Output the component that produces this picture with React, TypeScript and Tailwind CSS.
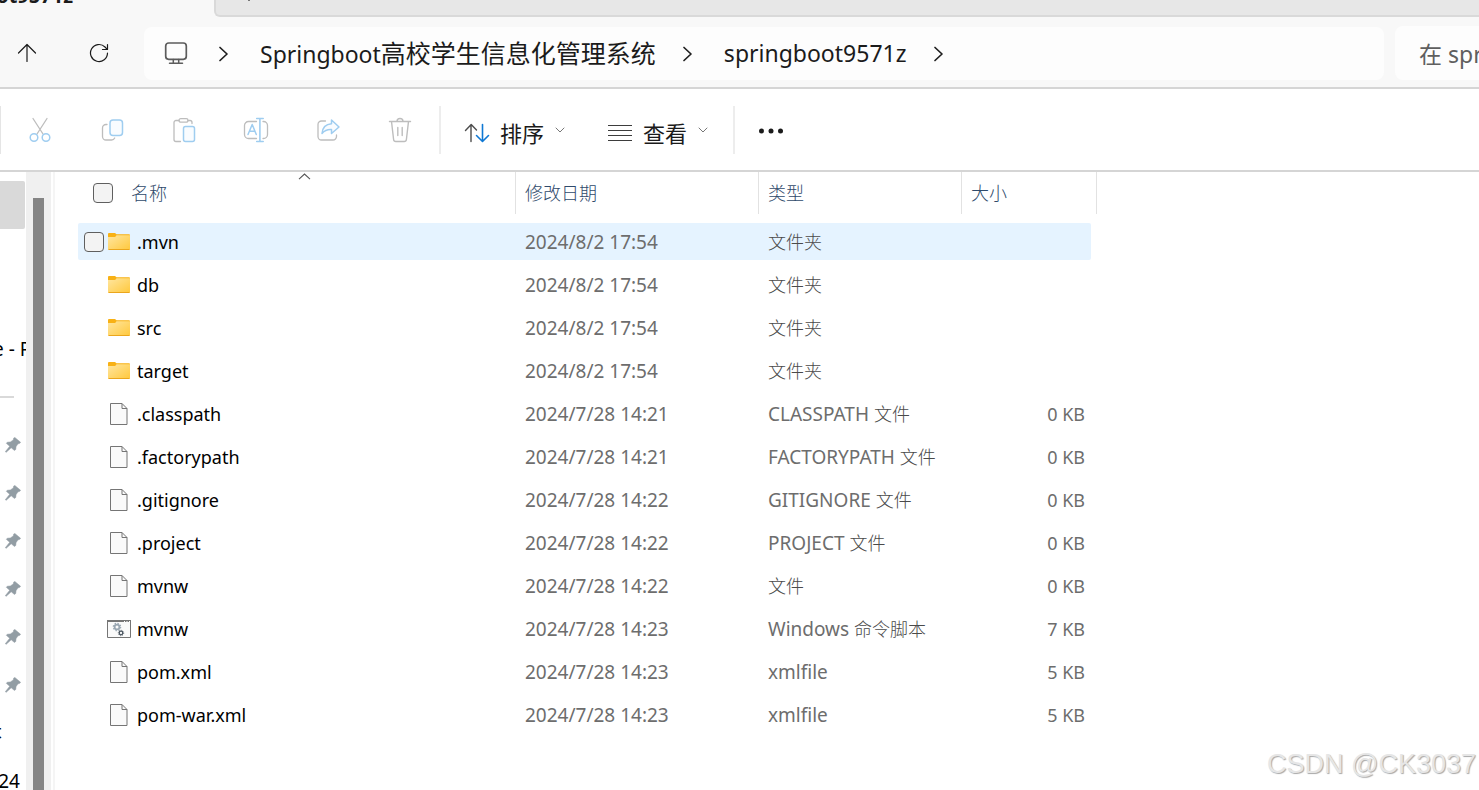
import type { ReactNode } from "react";

type Kind = "folder" | "file" | "batch";

interface Entry {
  name: string;
  kind: Kind;
  date: string;
  typeLatin?: string;
  typeHan?: string;
  size?: string;
}

const entries: Entry[] = [
  { name: ".mvn", kind: "folder", date: "2024/8/2 17:54", typeHan: "文件夹" },
  { name: "db", kind: "folder", date: "2024/8/2 17:54", typeHan: "文件夹" },
  { name: "src", kind: "folder", date: "2024/8/2 17:54", typeHan: "文件夹" },
  { name: "target", kind: "folder", date: "2024/8/2 17:54", typeHan: "文件夹" },
  { name: ".classpath", kind: "file", date: "2024/7/28 14:21", typeLatin: "CLASSPATH ", typeHan: "文件", size: "0 KB" },
  { name: ".factorypath", kind: "file", date: "2024/7/28 14:21", typeLatin: "FACTORYPATH ", typeHan: "文件", size: "0 KB" },
  { name: ".gitignore", kind: "file", date: "2024/7/28 14:22", typeLatin: "GITIGNORE ", typeHan: "文件", size: "0 KB" },
  { name: ".project", kind: "file", date: "2024/7/28 14:22", typeLatin: "PROJECT ", typeHan: "文件", size: "0 KB" },
  { name: "mvnw", kind: "file", date: "2024/7/28 14:22", typeHan: "文件", size: "0 KB" },
  { name: "mvnw", kind: "batch", date: "2024/7/28 14:23", typeLatin: "Windows ", typeHan: "命令脚本", size: "7 KB" },
  { name: "pom.xml", kind: "file", date: "2024/7/28 14:23", typeLatin: "xmlfile", size: "5 KB" },
  { name: "pom-war.xml", kind: "file", date: "2024/7/28 14:23", typeLatin: "xmlfile", size: "5 KB" },
];

const GRAY = "#bdbdbd";
const BLUE = "#9fcdf0";

function Svg({ size = 26, children }: { size?: number; children: ReactNode }) {
  return (
    <svg width={size} height={size} viewBox={`0 0 ${size} ${size}`} fill="none" strokeLinecap="round" strokeLinejoin="round" aria-hidden="true">
      {children}
    </svg>
  );
}

function CutIcon() {
  return (
    <Svg>
      <path d="M6 1.500 16 17M20 1.500 10 17" stroke={GRAY} strokeWidth="1.300" />
      <circle cx="7" cy="20.500" r="3.800" stroke={BLUE} strokeWidth="1.500" />
      <circle cx="19" cy="20.500" r="3.800" stroke={BLUE} strokeWidth="1.500" />
    </Svg>
  );
}

function CopyIcon() {
  return (
    <Svg>
      <path d="M8 7.500h-1A3.500 3.500 0 0 0 3.500 11v8.500A3.500 3.500 0 0 0 7 23h5.500a3.500 3.500 0 0 0 3.200-2" stroke={GRAY} strokeWidth="1.300" />
      <rect x="11" y="3" width="12.500" height="15.500" rx="3" stroke={BLUE} strokeWidth="1.500" fill="#f9fcff" />
    </Svg>
  );
}

function PasteIcon() {
  return (
    <Svg>
      <path d="M8 3.500H5a2 2 0 0 0-2 2v17a2 2 0 0 0 2 2h4.500M17 3.500h2a2 2 0 0 1 2 2V6.500" stroke={GRAY} strokeWidth="1.300" />
      <rect x="8" y="1.700" width="9" height="3.500" rx="1.750" stroke={GRAY} strokeWidth="1.300" />
      <rect x="12.500" y="9.500" width="11" height="15" rx="2" stroke={BLUE} strokeWidth="1.500" fill="#f9fcff" />
    </Svg>
  );
}

function RenameIcon() {
  return (
    <Svg>
      <path d="M13.500 4.500H5.500A4 4 0 0 0 1.500 8.500v9A4 4 0 0 0 5.500 21.500h8M20 4.500h.5a4 4 0 0 1 4 4v9a4 4 0 0 1-4 4H20" stroke={GRAY} strokeWidth="1.300" />
      <path d="M5 17.500 9.200 7.500 13.300 17.500M6.400 14.300h5.500" stroke={BLUE} strokeWidth="1.500" />
      <path d="M13.700 1.500h6.500M13.700 24.500h6.500M16.900 1.500v23" stroke={BLUE} strokeWidth="1.600" />
    </Svg>
  );
}

function ShareIcon() {
  return (
    <Svg>
      <path d="M10.500 4H6.500A3.500 3.500 0 0 0 3 7.500v12A3.500 3.500 0 0 0 6.500 23h11.500a3.500 3.500 0 0 0 3.500-3.500v-1.500" stroke={GRAY} strokeWidth="1.300" />
      <path d="M16.500 3 24 10l-7.500 6.500v-4c-4.500-.3-7.200 1.200-9.500 4 .5-5.500 3.500-9.300 9.500-9.700z" stroke={BLUE} strokeWidth="1.500" fill="#f9fcff" />
    </Svg>
  );
}

function DeleteIcon() {
  return (
    <Svg>
      <path d="M2.500 4.500h21M4.500 4.500l2.100 18a2.200 2.200 0 0 0 2.200 2h8.400a2.200 2.200 0 0 0 2.200-2l2.100-18M10 4.500a3 3 0 0 1 6 0M10.800 10.500v8M15.200 10.500v8" stroke={GRAY} strokeWidth="1.400" />
    </Svg>
  );
}

function SortIcon() {
  return (
    <Svg>
      <path d="M7 21.500V5M1.500 10.500 7.200 4.500l5.300 5.500" stroke="#4d4d4d" strokeWidth="1.400" />
      <path d="M18.500 4.500V21M12.500 15.500l6 6 6-6" stroke="#0f78d4" strokeWidth="1.600" />
    </Svg>
  );
}

function ViewIcon() {
  return (
    <Svg>
      <path d="M1 5.500h24M1 10.500h24M1 15.500h24M1 20.500h24" stroke="#3d3d3d" strokeWidth="1" strokeLinecap="butt" />
    </Svg>
  );
}

function SmallChevron() {
  return (
    <Svg size={10}>
      <path d="M1 3l4 4 4-4" stroke="#777" strokeWidth="1" />
    </Svg>
  );
}

function PathChevron() {
  return (
    <Svg size={16}>
      <path d="M4 1.500 11 8l-7 6.500" stroke="#1f1f1f" strokeWidth="1.700" />
    </Svg>
  );
}

function FolderIcon() {
  return (
    <svg width="22" height="17" viewBox="0 0 22 17" aria-hidden="true">
      <defs>
        <linearGradient id="folder-face" x1="0" y1="0" x2="1" y2="1">
          <stop offset="0" stopColor="#ffe6a0" />
          <stop offset="1" stopColor="#ffc83c" />
        </linearGradient>
      </defs>
      <path d="M0 1A1 1 0 0 1 1 0h6L8.500 1.200H21a1 1 0 0 1 1 1v3H0z" fill="#f8b115" />
      <path d="M0 4h7.200L8.500 2.200H22V15.800A1.200 1.200 0 0 1 20.800 17H1.200A1.200 1.200 0 0 1 0 15.800z" fill="url(#folder-face)" />
      <path d="M.5 16.500h21" stroke="#eba61c" strokeWidth="1" />
    </svg>
  );
}

function FileIcon() {
  return (
    <svg width="18" height="23" viewBox="0 0 18 23" aria-hidden="true">
      <path d="M.5 1.500h11.500l5 5v16H.5z" fill="#fafafa" stroke="#757575" />
      <path d="M12 1.500v5h5" fill="none" stroke="#757575" />
    </svg>
  );
}

function BatchIcon() {
  return (
    <svg width="24" height="19" viewBox="0 -1 24 19" aria-hidden="true">
      <path d="M.5.5h23v17H.5z" fill="#fafafa" stroke="#757575" />
      <path d="M0 1h24" stroke="#757575" strokeWidth="2" />
      <path d="M17 1.500h1M19.500 1.500h1M22 1.500h1" stroke="#fff" />
      <circle cx="10" cy="7" r="2.400" fill="none" stroke="#9aa7b2" strokeWidth="1.800" />
      <circle cx="10" cy="7" r="3.700" fill="none" stroke="#9aa7b2" strokeWidth="1.200" strokeDasharray="1.450 1.450" />
      <circle cx="14" cy="13" r="1.800" fill="none" stroke="#4a5560" strokeWidth="1.300" />
      <circle cx="14" cy="13" r="2.700" fill="none" stroke="#4a5560" strokeWidth=".8" strokeDasharray="1.060 1.060" />
    </svg>
  );
}

function PinIcon() {
  return (
    <svg width="16" height="16" viewBox="0 0 16 16" aria-hidden="true">
      <path d="M9.800.4 15.600 5.300 14.800 6.300 12.800 7 11 9.800 10.800 12.400 9.500 13.500 6.200 10.800 1.200 15.300 .3 14.700 4.700 9.300 1.300 6.300 2.300 5.200 5.300 5 8.300 2.900 8.700 1.100z" fill="#929da4" stroke="#929da4" strokeWidth=".5" strokeLinejoin="round" />
    </svg>
  );
}

const kindIcon: Record<Kind, ReactNode> = {
  folder: <FolderIcon />,
  file: <FileIcon />,
  batch: <BatchIcon />,
};

function Tick({ label }: { label: string }) {
  return (
    <input
      type="checkbox"
      aria-label={label}
      className="size-5 shrink-0 appearance-none rounded-[4px] border border-[#5f5f5f] bg-[#f3f3f3] checked:bg-[#0067c0]"
    />
  );
}

function TabStrip() {
  return (
    <div className="flex h-[17px] shrink-0 overflow-hidden">
      <div className="flex w-[214px] shrink-0 items-end">
        <div className="flex w-[73px] justify-end text-[20px] leading-[26px] font-bold text-[#1b1b1b]">
          <span className="mb-2">springboot9571z</span>
        </div>
      </div>
      <div className="flex-1 rounded-bl-md border-b-2 border-l-2 border-[#d9d9d9] bg-[#e7e7e7] pl-8">
        <div className="h-px w-[2px] bg-[#777]" />
      </div>
    </div>
  );
}

function AddressBar() {
  return (
    <div className="flex shrink-0 items-end border-b-2 border-[#d5d5d5] pt-[9px] pb-[7px]">
      <div className="flex h-[54px] w-[144px] shrink-0 items-center">
        <button aria-label="上移" className="flex w-[53px] justify-center">
          <Svg size={20}>
            <path d="M10 18.500V1.500M1.500 10 10 1.500l8.500 8.500" stroke="#1b1b1b" strokeWidth="1.200" />
          </Svg>
        </button>
        <button aria-label="刷新" className="ml-[35px] flex w-[22px] justify-center">
          <Svg size={20}>
            <path d="M18.500 10A8.500 8.500 0 1 1 16 4l2.200 2.300M18.500 1.500v5h-5" stroke="#1b1b1b" strokeWidth="1.200" />
          </Svg>
        </button>
      </div>
      <nav aria-label="路径" className="flex h-[53px] min-w-0 flex-1 items-center rounded-lg bg-[#fdfdfd] pl-5 text-[23px] whitespace-nowrap text-[#1b1b1b]">
        <button aria-label="此电脑" className="flex w-6 justify-center pb-[2px]">
          <Svg size={24}>
            <rect x="1.700" y="2" width="20.600" height="16.300" rx="3" stroke="#5c5c5c" strokeWidth="1.700" />
            <path d="M9.300 18.500v3.500M14.700 18.500v3.500M5.500 22.300h13" stroke="#5c5c5c" strokeWidth="1.500" />
          </Svg>
        </button>
        <span className="ml-7 w-4"><PathChevron /></span>
        <button className="ml-7">
          Springboot<span className="text-[25px]">高校学生信息化管理系统</span>
        </button>
        <span className="ml-6 w-4"><PathChevron /></span>
        <button className="ml-7">springboot9571z</button>
        <span className="ml-6 w-4"><PathChevron /></span>
      </nav>
      <input
        aria-label="搜索"
        placeholder="在 springboot9571z 中搜索"
        className="ml-[11px] h-[54px] w-[84px] shrink-0 rounded-l-lg bg-[#fdfdfd] pt-[2px] pl-6 text-[23px] outline-none placeholder:text-[#5f5f5f]"
      />
    </div>
  );
}

const tools = [
  { label: "剪切", icon: <CutIcon /> },
  { label: "复制", icon: <CopyIcon /> },
  { label: "粘贴", icon: <PasteIcon /> },
  { label: "重命名", icon: <RenameIcon /> },
  { label: "共享", icon: <ShareIcon /> },
  { label: "删除", icon: <DeleteIcon /> },
];

function Toolbar() {
  return (
    <div className="flex h-[83px] shrink-0 items-center border-b-2 border-[#d5d5d5] bg-white text-[22px] text-[#1b1b1b]">
      <div className="h-12 w-px bg-[#e5e5e5]" />
      <div className="flex pl-[3px]">
        {tools.map((t) => (
          <button key={t.label} aria-label={t.label} className="flex w-[72px] justify-center">
            {t.icon}
          </button>
        ))}
      </div>
      <div className="ml-[3px] h-12 w-[2px] bg-[#ededed]" />
      <button className="ml-[23px] flex items-center">
        <span className="pt-[6px]"><SortIcon /></span>
        <span className="ml-[10px] pt-2">排序</span>
        <span className="ml-[11px]"><SmallChevron /></span>
      </button>
      <button className="ml-[42px] flex items-center">
        <span className="pt-[6px]"><ViewIcon /></span>
        <span className="ml-[10px] pt-2">查看</span>
        <span className="ml-[11px]"><SmallChevron /></span>
      </button>
      <div className="ml-[25px] h-12 w-[2px] bg-[#ededed]" />
      <button aria-label="更多" className="ml-[23px]">
        <Svg>
          <g fill="#1b1b1b">
            <circle cx="3.500" cy="14" r="2.500" />
            <circle cx="13" cy="14" r="2.500" />
            <circle cx="22.500" cy="14" r="2.500" />
          </g>
        </Svg>
      </button>
    </div>
  );
}

function Sidebar() {
  return (
    <aside className="flex shrink-0 overflow-hidden">
      <div className="w-[26px] overflow-hidden bg-white pt-[9px] text-[19px] text-black">
        <div className="mr-px h-12 rounded-r-xs bg-[#d9d9d9]" />
        <div className="h-24" />
        <div className="flex h-12 items-center overflow-hidden whitespace-nowrap">
          <span className="-ml-[7px]">e - Personal</span>
        </div>
        <div className="flex h-12 items-center">
          <div className="h-[2px] w-[14px] bg-[#d9d9d9]" />
        </div>
        {[0, 1, 2, 3, 4, 5].map((i) => (
          <div key={i} className="flex h-12 items-center pl-[5px]">
            <PinIcon />
          </div>
        ))}
        <div className="flex h-12 w-[2px] items-center justify-end overflow-hidden text-[18px]">
          <span>本</span>
        </div>
        <div className="flex h-12 w-5 items-center justify-end whitespace-nowrap">
          <span>2024</span>
        </div>
      </div>
      <div className="w-[25px] bg-[#f0f0f0] pt-[26px]">
        <div className="ml-[7px] h-full w-[11px] bg-[#858585]" />
      </div>
      <div className="ml-[2px] w-[2px] bg-[#f5f5f5]" />
    </aside>
  );
}

function HeadCell({ children, className = "" }: { children: ReactNode; className?: string }) {
  return (
    <th scope="col" className="p-0 pb-[6px] text-left font-light">
      <div className={`flex h-[42px] items-center border-r border-[#e2e2e2] ${className}`}>{children}</div>
    </th>
  );
}

function FileList() {
  return (
    <main className="min-w-0 flex-1 overflow-hidden bg-white pl-[23px]">
      <table className="w-[1019px] table-fixed border-separate border-spacing-0 whitespace-nowrap">
        <colgroup>
          <col className="w-[438px]" />
          <col className="w-[243px]" />
          <col className="w-[203px]" />
          <col className="w-[135px]" />
        </colgroup>
        <thead className="text-[18px] text-[#2f4a6b]">
          <tr>
            <HeadCell className="relative pl-[15px]">
              <Tick label="全选" />
              <span className="ml-[18px]">名称</span>
              <svg className="absolute top-[1px] left-[220px]" width="13" height="7" viewBox="0 0 13 7" fill="none" aria-hidden="true">
                <path d="M1 6.200 6.500 1 12 6.200" stroke="#555" strokeWidth="1.100" />
              </svg>
            </HeadCell>
            <HeadCell className="pl-[9px]">修改日期</HeadCell>
            <HeadCell className="pl-[9px]">类型</HeadCell>
            <HeadCell className="pl-[9px]">大小</HeadCell>
          </tr>
        </thead>
        <tbody className="text-[19px] text-[#6d6d6d]">
          {entries.map((e, i) => {
            const tint = i === 0 ? "bg-[#e5f3ff]" : "";
            return (
              <tr key={i}>
                <td className="p-0 py-[3px]">
                  <div className={`flex h-[37px] items-center rounded-l-xs pl-[6px] text-[18px] text-black ${tint}`}>
                    <span className="flex w-5">{i === 0 && <Tick label={e.name} />}</span>
                    <span className="ml-[3px] flex w-6 justify-center">{kindIcon[e.kind]}</span>
                    <span className="ml-[6px] pt-[2px]">{e.name}</span>
                  </div>
                </td>
                <td className="p-0 py-[3px]">
                  <div className={`flex h-[37px] items-center pt-[2px] pl-[9px] ${tint}`}>{e.date}</div>
                </td>
                <td className="p-0 py-[3px]">
                  <div className={`flex h-[37px] items-center pt-[2px] pl-[9px] ${tint}`}>
                    <span>
                      {e.typeLatin}
                      {e.typeHan && <span className="text-[18px] font-light text-[#4a4a4a]">{e.typeHan}</span>}
                    </span>
                  </div>
                </td>
                <td className="p-0 py-[3px] pr-[6px]">
                  <div className={`flex h-[37px] items-center justify-end rounded-r-xs pt-[2px] pr-[6px] text-[18px] ${tint}`}>{e.size}</div>
                </td>
              </tr>
            );
          })}
        </tbody>
      </table>
    </main>
  );
}

export default function App() {
  return (
    <div className="relative flex h-screen flex-col overflow-hidden bg-[#f8f8f8] font-['Noto_Sans','Noto_Sans_CJK_SC',sans-serif]">
      <TabStrip />
      <AddressBar />
      <Toolbar />
      <div className="flex min-h-0 flex-1 bg-white">
        <Sidebar />
        <FileList />
      </div>
      <div className="absolute right-[3px] bottom-[6px] font-['Liberation_Sans',sans-serif] text-[27px] leading-[40px] text-[#e6e6e6] [text-shadow:1px_1px_1px_#a8a8a8]">
        CSDN @CK3037
      </div>
    </div>
  );
}
